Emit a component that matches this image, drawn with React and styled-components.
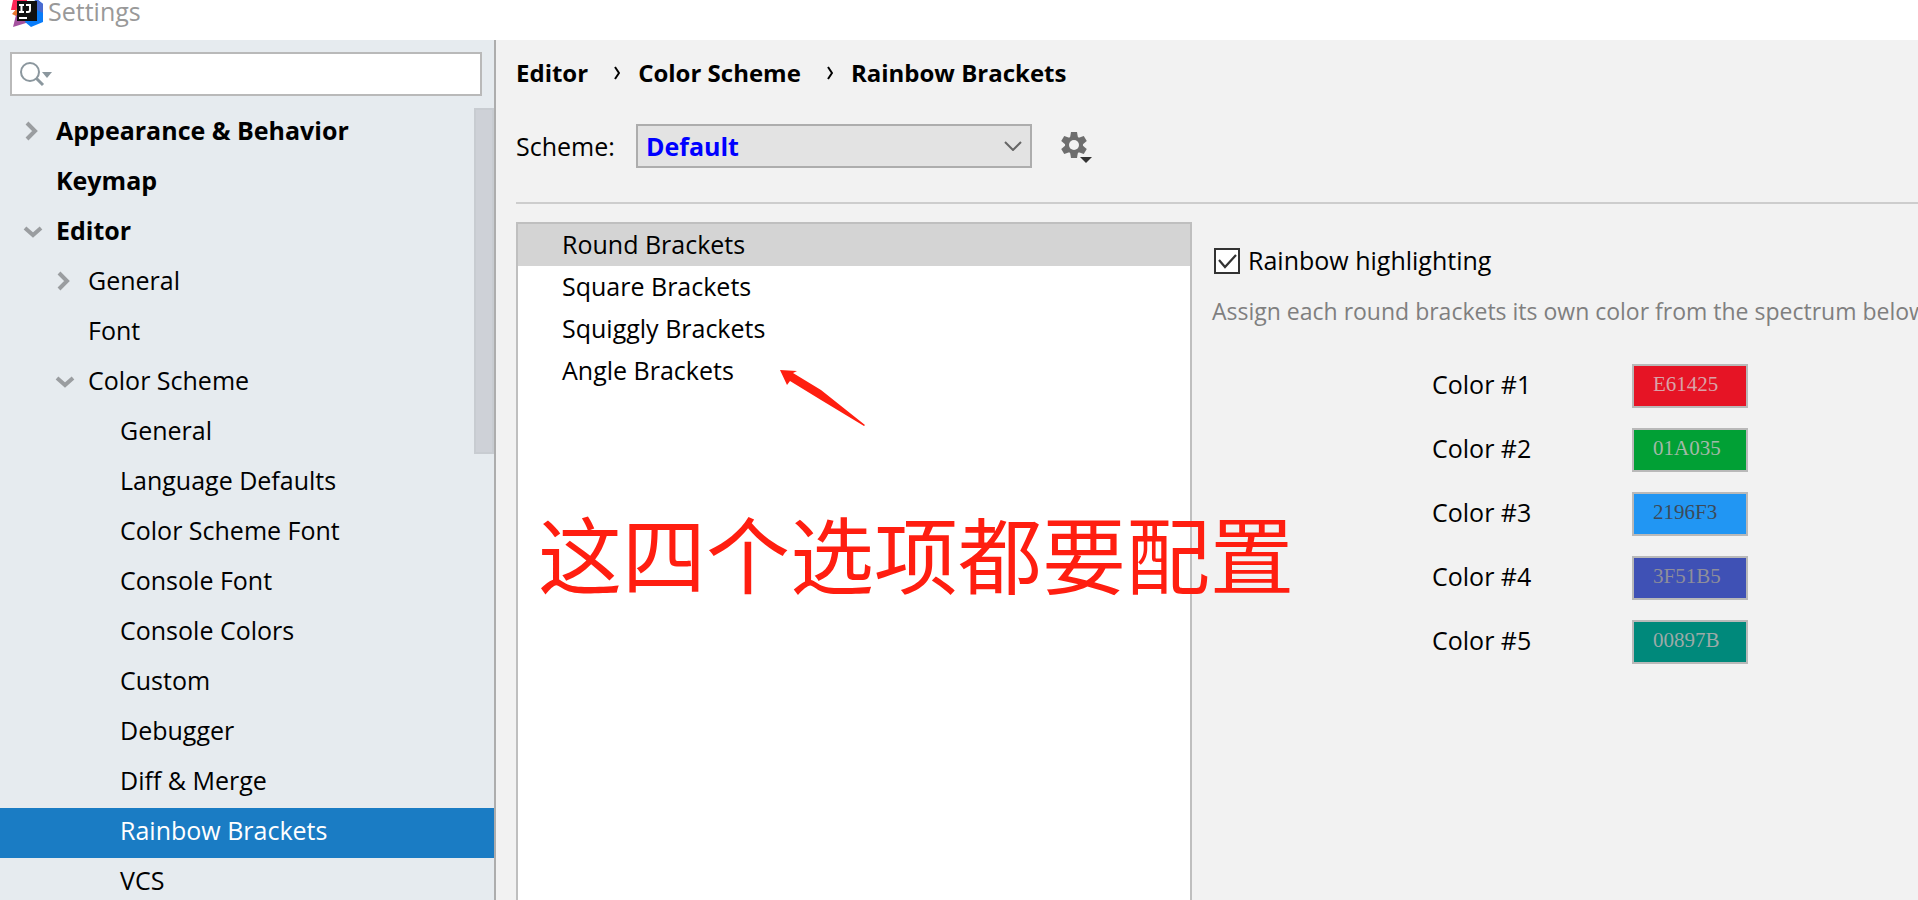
import React, { useState } from 'react';
import styled, { createGlobalStyle, css } from 'styled-components';

const GlobalStyle = createGlobalStyle`
  * {
    box-sizing: border-box;
  }
  body {
    margin: 0;
    overflow: hidden;
    background: #f2f2f2;
    color: #000;
    font: 25px/34px 'Open Sans', 'Noto Sans CJK SC', sans-serif;
  }
  button, input, select {
    font: inherit;
    color: inherit;
  }
`;

const Window = styled.div`
  display: flex;
  flex-direction: column;
  height: 100vh;
  overflow: hidden;
`;
const TitleBar = styled.header`
  display: flex;
  flex: none;
  gap: 4px;
  height: 40px;
  padding-left: 11px;
  background: #fff;
  color: #999;
  svg {
    flex: none;
  }
  span {
    margin-top: -6px;
  }
`;
const Body = styled.div`
  display: flex;
  flex: 1;
  min-height: 0;
`;

// sidebar
const Sidebar = styled.aside`
  display: flex;
  flex-direction: column;
  flex: none;
  width: 496px;
  background: #e6ebef;
  border-right: 2px solid #adadad;
`;
const SearchBox = styled.label`
  display: flex;
  flex: none;
  align-items: center;
  height: 44px;
  margin: 12px 12px 12px 10px;
  padding-left: 8px;
  background: #fff;
  border: 2px solid #b9b9b9;
  input {
    flex: 1;
    min-width: 0;
    border: none;
    outline: none;
    background: transparent;
  }
`;
const TreeArea = styled.div`
  display: flex;
  flex: 1;
  min-height: 0;
  position: relative;
`;
const Tree = styled.nav`
  flex: 1;
  overflow: hidden;
`;
const TreeItem = styled.button`
  display: flex;
  align-items: center;
  width: 100%;
  height: 50px;
  padding: 0 0 6px ${({ $level }) => 22 + $level * 32}px;
  border: none;
  background: transparent;
  text-align: left;
  white-space: nowrap;
  font-weight: ${({ $level }) => ($level === 0 ? 'bold' : 'normal')};
  ${({ $active }) =>
    $active &&
    css`
      background: #1a7cc4;
      color: #fff;
    `}
`;
const Twisty = styled.span`
  display: flex;
  flex: none;
  width: 34px;
`;
const ScrollThumb = styled.div`
  position: absolute;
  top: 0;
  right: 0;
  width: 20px;
  height: 346px;
  background: #ced1d7;
  border: 2px solid #c8ccd1;
`;

// right side
const Main = styled.main`
  display: flex;
  flex-direction: column;
  flex: 1;
  min-width: 0;
  padding-left: 20px;
`;
const Breadcrumb = styled.div`
  display: flex;
  flex: none;
  align-items: center;
  height: 66px;
  font-size: 24px;
  font-weight: bold;
  svg {
    margin: 0 18px 0 26px;
  }
`;
const SchemeRow = styled.div`
  display: flex;
  flex: none;
  align-items: center;
  height: 98px;
  padding-bottom: 16px;
  border-bottom: 2px solid #cdcdcd;
`;
const SchemeLabel = styled.label`
  width: 120px;
`;
const SelectWrap = styled.div`
  display: grid;
  align-items: center;
  width: 396px;
  margin-right: 29px;
  select, svg {
    grid-area: 1 / 1;
  }
  select {
    width: 100%;
    height: 44px;
    padding: 0 8px;
    appearance: none;
    border: 2px solid #adadad;
    border-radius: 0;
    background: #e3e3e3;
    color: #00f;
    font-weight: bold;
  }
  svg {
    justify-self: end;
    margin-right: 10px;
    pointer-events: none;
  }
`;
const GearButton = styled.button`
  display: flex;
  padding: 4px 0 0;
  border: none;
  background: transparent;
`;
const Panels = styled.div`
  display: flex;
  flex: 1;
  min-height: 0;
  margin-top: 18px;
`;
const BracketList = styled.div`
  flex: none;
  position: relative;
  width: 676px;
  background: #fff;
  border: 2px solid #bfbfbf;
  border-bottom: none;
`;
const BracketItem = styled.button`
  display: block;
  width: 100%;
  height: 42px;
  padding: 0 44px 2px;
  border: none;
  background: ${({ $active }) => ($active ? '#d4d4d4' : 'transparent')};
  text-align: left;
`;
const NoteArrow = styled.svg`
  position: absolute;
  left: 262px;
  top: 146px;
`;
const Note = styled.div`
  position: absolute;
  left: 20px;
  top: 268px;
  color: #ff1e10;
  font: 84px/120px 'Noto Sans CJK SC', sans-serif;
  white-space: nowrap;
`;
const Options = styled.section`
  flex: 1;
  min-width: 0;
  padding: 22px 0 0 20px;
`;
const CheckLabel = styled.label`
  display: flex;
  align-items: center;
  gap: 8px;
  height: 34px;
  padding-left: 2px;
  span {
    padding-bottom: 2px;
  }
`;
const Checkbox = styled.input`
  appearance: none;
  width: 26px;
  height: 26px;
  margin: 0;
  border: 2px solid #333;
  background: #fff;
  &:checked {
    background: #fff url("data:image/svg+xml,%3Csvg xmlns='http://www.w3.org/2000/svg' viewBox='0 0 22 22'%3E%3Cpath d='M3 10l6 7L20 5' fill='none' stroke='%23333' stroke-width='2.2'/%3E%3C/svg%3E");
  }
`;
const Description = styled.p`
  margin: 16px 0 36px;
  color: #7f7f7f;
  font-size: 23px;
  white-space: nowrap;
`;
const ColorRow = styled.div`
  display: flex;
  align-items: center;
  height: 44px;
  margin: 0 0 20px 220px;
  label {
    width: 200px;
    padding-bottom: 4px;
  }
`;
const Swatch = styled.input`
  width: 116px;
  height: 44px;
  padding: 0 0 3px 19px;
  border: 2px solid #b9b9b9;
  border-radius: 0;
  outline: none;
  background: ${({ $bg }) => $bg};
  color: ${({ $fg }) => $fg};
  font: 21px 'Liberation Serif', serif;
`;

const tree = [
  { name: 'Appearance & Behavior', level: 0, open: false },
  { name: 'Keymap', level: 0 },
  { name: 'Editor', level: 0, open: true },
  { name: 'General', level: 1, open: false },
  { name: 'Font', level: 1 },
  { name: 'Color Scheme', level: 1, open: true },
  { name: 'General', level: 2 },
  { name: 'Language Defaults', level: 2 },
  { name: 'Color Scheme Font', level: 2 },
  { name: 'Console Font', level: 2 },
  { name: 'Console Colors', level: 2 },
  { name: 'Custom', level: 2 },
  { name: 'Debugger', level: 2 },
  { name: 'Diff & Merge', level: 2 },
  { name: 'Rainbow Brackets', level: 2 },
  { name: 'VCS', level: 2 },
];
const brackets = ['Round Brackets', 'Square Brackets', 'Squiggly Brackets', 'Angle Brackets'];
const colors = [
  { value: 'E61425', fg: '#d9a3a8' },
  { value: '01A035', fg: '#a3b9a8' },
  { value: '2196F3', fg: '#3b4a5a' },
  { value: '3F51B5', fg: '#8e8e9a' },
  { value: '00897B', fg: '#9caaa8' },
];

const Logo = () => (
  <svg width="33" height="28" viewBox="0 0 33 28">
    <path d="M2 0h14v10H0z" fill="#fe2857" />
    <path d="M1 14l6-7v10z" fill="#e8762d" />
    <path d="M5 15h14v7l-4 1-13 4z" fill="#a4529f" />
    <path d="M24 0h3l5 4v18l-12 5-6-5z" fill="#087cfa" />
    <path d="M24 0h3l5 4v9l-8-4z" fill="#4a6bd0" />
    <path d="M6 1h20v20H6z" fill="#101010" />
    <path d="M8 5h5M10.500 5v7M8 12h5M15 5h4v5q0 2-2 2h-2" fill="none" stroke="#fff" strokeWidth="2" />
    <path d="M8 17h8v2H8z" fill="#fff" />
  </svg>
);

const SearchIcon = () => (
  <svg width="34" height="26" viewBox="0 0 34 26">
    <circle cx="10" cy="11" r="9" fill="none" stroke="#8b979e" strokeWidth="2" />
    <path d="M16 17l7 7" stroke="#8b979e" strokeWidth="3" />
    <path d="M22 11h10l-5 6z" fill="#8b979e" />
  </svg>
);

const Chevron = ({ open }) => (
  <svg width="22" height="22" viewBox="0 0 22 22">
    <path
      d={open ? 'M3 9l8 7 8-7' : 'M5 4l8 8-8 8'}
      fill="none"
      stroke="#9a9da0"
      strokeWidth="4"
    />
  </svg>
);

const Separator = () => (
  <svg width="6" height="14" viewBox="0 0 6 14">
    <path d="M1 1l4 6-4 6" fill="none" stroke="#000" strokeWidth="2" />
  </svg>
);

const Gear = () => (
  <svg width="34" height="32" viewBox="0 0 34 32">
    <g fill="#6e6e6e">
      {[0, 60, 120].map((deg) => (
        <path key={deg} d="M10 0h6l1 6v14l-1 6h-6l-1-6V6z" transform={`rotate(${deg} 13 13)`} />
      ))}
      <circle cx="13" cy="13" r="9" />
    </g>
    <circle cx="13" cy="13" r="5" fill="#f2f2f2" />
    <path d="M19 25h12l-6 6z" fill="#333" />
  </svg>
);

const App = () => {
  const [page, setPage] = useState(14);
  const [bracket, setBracket] = useState(0);

  return (
    <>
      <GlobalStyle />
      <Window>
        <TitleBar>
          <Logo />
          <span>Settings</span>
        </TitleBar>
        <Body>
          <Sidebar>
            <SearchBox>
              <SearchIcon />
              <input type="text" aria-label="Search settings" />
            </SearchBox>
            <TreeArea>
              <Tree>
                {tree.map((item, index) => (
                  <TreeItem
                    key={index}
                    $level={item.level}
                    $active={index === page}
                    onClick={() => setPage(index)}
                  >
                    <Twisty>{item.open !== undefined && <Chevron open={item.open} />}</Twisty>
                    {item.name}
                  </TreeItem>
                ))}
              </Tree>
              <ScrollThumb />
            </TreeArea>
          </Sidebar>
          <Main>
            <Breadcrumb>
              Editor
              <Separator />
              Color Scheme
              <Separator />
              Rainbow Brackets
            </Breadcrumb>
            <SchemeRow>
              <SchemeLabel htmlFor="scheme">Scheme:</SchemeLabel>
              <SelectWrap>
                <select id="scheme">
                  <option>Default</option>
                </select>
                <svg width="18" height="10" viewBox="0 0 18 10">
                  <path d="M1 1l8 8 8-8" fill="none" stroke="#666" strokeWidth="2" />
                </svg>
              </SelectWrap>
              <GearButton aria-label="Scheme actions">
                <Gear />
              </GearButton>
            </SchemeRow>
            <Panels>
              <BracketList>
                {brackets.map((name, index) => (
                  <BracketItem
                    key={name}
                    $active={index === bracket}
                    onClick={() => setBracket(index)}
                  >
                    {name}
                  </BracketItem>
                ))}
                <NoteArrow width="86" height="58" viewBox="0 0 86 58">
                  <path d="M0 0l17 1-4 2 28 17 44 35-1 1-43-26-31-19-3 4z" fill="#ff1e10" />
                </NoteArrow>
                <Note>这四个选项都要配置</Note>
              </BracketList>
              <Options>
                <CheckLabel>
                  <Checkbox type="checkbox" defaultChecked />
                  <span>Rainbow highlighting</span>
                </CheckLabel>
                <Description>
                  Assign each round brackets its own color from the spectrum below
                </Description>
                {colors.map(({ value, fg }, index) => (
                  <ColorRow key={value}>
                    <label htmlFor={`color${index}`}>Color #{index + 1}</label>
                    <Swatch id={`color${index}`} defaultValue={value} $bg={`#${value}`} $fg={fg} />
                  </ColorRow>
                ))}
              </Options>
            </Panels>
          </Main>
        </Body>
      </Window>
    </>
  );
};

export default App;
